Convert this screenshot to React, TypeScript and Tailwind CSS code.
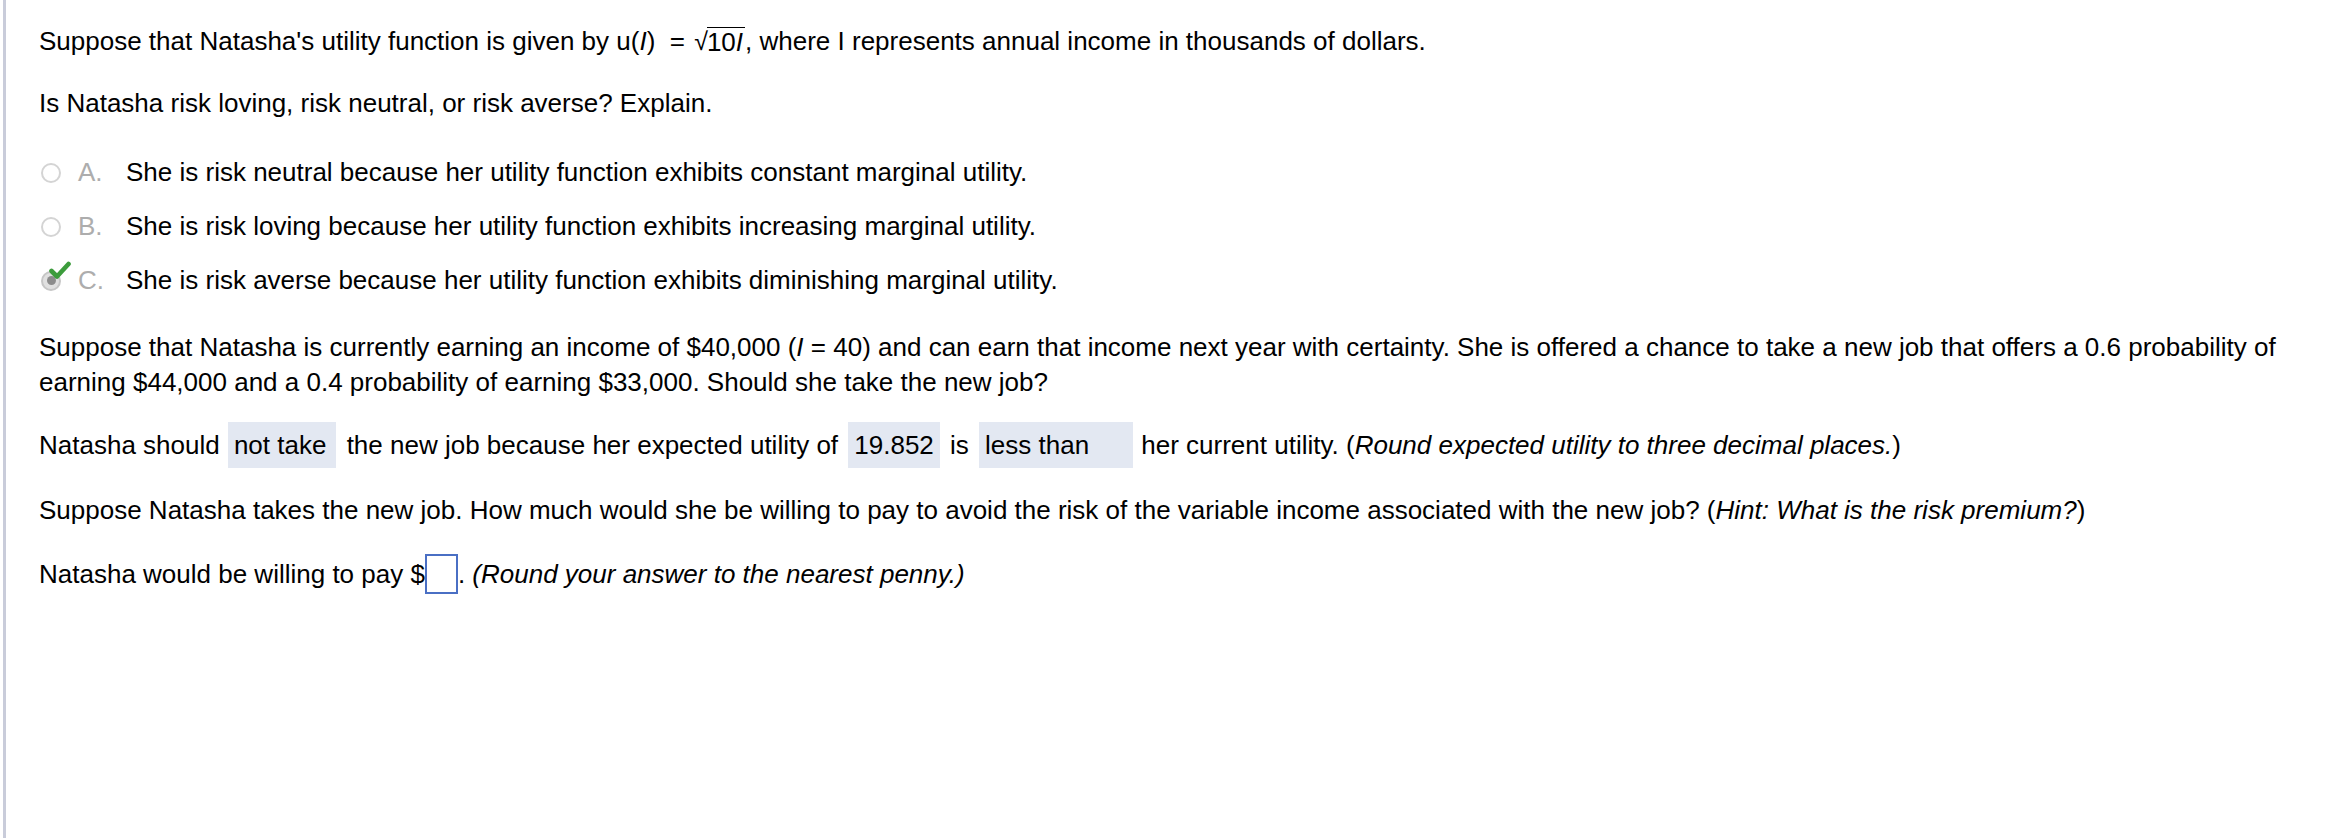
import React from 'react';

const Radio: React.FC<{ checked?: boolean }> = ({ checked }) => (
  <span className="relative inline-flex w-[20px] h-[20px] shrink-0 ml-[2px]">
    <span
      className={`w-[20px] h-[20px] rounded-full border-[2.5px] flex items-center justify-center ${
        checked ? 'border-[#c6c6c6] bg-[#e0e0e0]' : 'border-[#d4d4d4] bg-white'
      }`}
    >
      {checked && <span className="w-[9px] h-[9px] rounded-full bg-[#8c8c8c]" />}
    </span>
    {checked && (
      <svg className="absolute left-[8px] top-[-10px]" width="22" height="19" viewBox="0 0 22 19">
        <path d="M2.5 10 L8 15.5 L19.5 3" fill="none" stroke="#3c9c3c" strokeWidth="4.6" strokeLinecap="round" strokeLinejoin="round" />
      </svg>
    )}
  </span>
);

const options = [
  { key: 'A', text: 'She is risk neutral because her utility function exhibits constant marginal utility.' },
  { key: 'B', text: 'She is risk loving because her utility function exhibits increasing marginal utility.' },
  { key: 'C', text: 'She is risk averse because her utility function exhibits diminishing marginal utility.', checked: true },
];

const Answer: React.FC<{ children: React.ReactNode; className?: string }> = ({ children, className }) => (
  <span className={`inline-flex items-center h-[46px] bg-[#e3e8f2] px-[6px] mx-[3px] ${className ?? ''}`}>{children}</span>
);

export default function App() {
  return (
    <div
      className="min-h-[838px] bg-white text-black border-l-[3px] border-[#c9ccda] ml-[3px] pl-[33px] pr-[20px] pt-[24px] text-[26px] leading-[35px]"
      style={{ fontFamily: '"Liberation Sans", Arial, sans-serif' }}
    >
      <p>
        Suppose that Natasha's utility function is given by u(<i>I</i>)&nbsp;&nbsp;=&nbsp;
        <span className="inline-flex items-end ml-[2px]">
          <span className="text-[25px] leading-[30px] mr-[-1px]">√</span>
          <span className="border-t-[1.5px] border-black leading-[28px] pr-[2px]">
            10<i>I</i>
          </span>
        </span>
        , where I represents annual income in thousands of dollars.
      </p>

      <p className="mt-[27px]">Is Natasha risk loving, risk neutral, or risk averse? Explain.</p>

      <div className="mt-[34px] flex flex-col gap-[19px]">
        {options.map((o) => (
          <div key={o.key} className="flex items-center">
            <Radio checked={o.checked} />
            <span className="ml-[17px] w-[48px] text-[#adadad]">{o.key}.</span>
            <span>{o.text}</span>
          </div>
        ))}
      </div>

      <p className="mt-[32px] max-w-[2290px]">
        Suppose that Natasha is currently earning an income of $40,000 (<i>I</i> = 40) and can earn that income next
        year with certainty. She is offered a chance to take a new job that offers a 0.6 probability of earning $44,000
        and a 0.4 probability of earning $33,000. Should she take the new job?
      </p>

      <div className="mt-[22px] flex items-center whitespace-pre">
        <span>Natasha should </span>
        <Answer className="pr-[10px] ml-[1px]">not take</Answer>
        <span> the new job because her expected utility of </span>
        <Answer>19.852</Answer>
        <span> is </span>
        <Answer className="w-[154px] mr-[1px]">less than</Answer>
        <span> her current utility. (</span>
        <i>Round expected utility to three decimal places.</i>
        <span>)</span>
      </div>

      <p className="mt-[25px]">
        Suppose Natasha takes the new job. How much would she be willing to pay to avoid the risk of the variable income
        associated with the new job? (<i>Hint: What is the risk premium?</i>)
      </p>

      <div className="mt-[26px] flex items-center whitespace-pre">
        <span>Natasha would be willing to pay $</span>
        <span className="inline-block w-[33px] h-[40px] border-[2px] border-[#4a6fc4] bg-white" />
        <span>. </span>
        <i>(Round your answer to the nearest penny.)</i>
      </div>
    </div>
  );
}
